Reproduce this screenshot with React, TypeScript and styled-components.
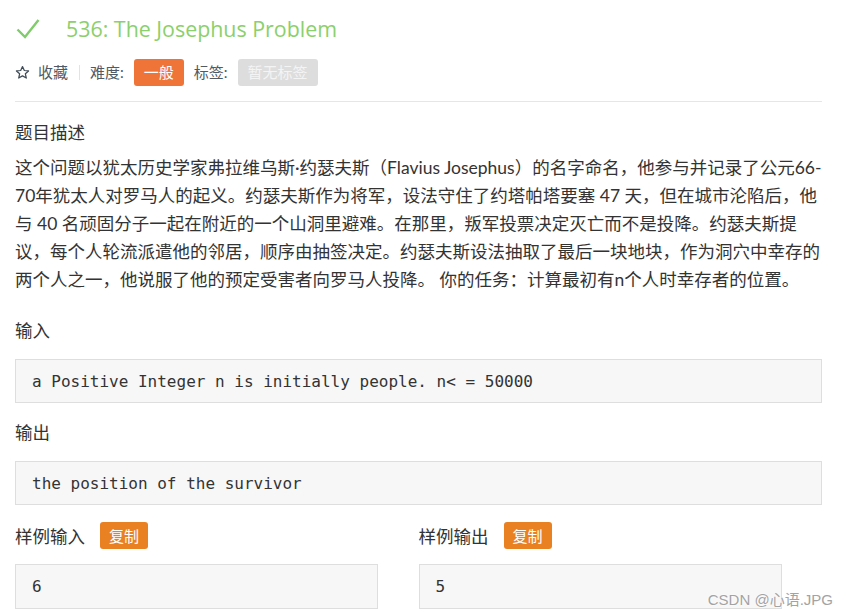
import styled, { createGlobalStyle } from "styled-components";

const GlobalStyle = createGlobalStyle`
  html, body {
    margin: 0;
    padding: 0;
    background: #ffffff;
  }
  body {
    font-family: "Lato", "Noto Sans CJK SC", sans-serif;
    color: #333333;
  }
  * {
    box-sizing: border-box;
  }
`;

const ProblemPage = styled.div`
  position: relative;
  width: 847px;
  height: 615px;
  overflow: hidden;
  padding: 9px 25px 0 15px;
`;

const TitleRow = styled.div`
  display: flex;
  align-items: center;
  height: 40px;
`;

const CheckMark = styled.svg`
  width: 24px;
  height: 22px;
  margin-left: 1px;
  flex-shrink: 0;
`;

const ProblemTitle = styled.h1`
  margin: 0 0 0 26px;
  font-family: "Open Sans", "Noto Sans", sans-serif;
  font-size: 21.4px;
  font-weight: 400;
  color: #8bd06c;
  line-height: 40px;
`;

const MetaRow = styled.div`
  display: flex;
  align-items: center;
  height: 27px;
  margin-top: 10px;
  font-size: 15px;
  color: #4f5a66;
`;

const MetaItem = styled.span`
  display: flex;
  align-items: center;
  gap: 8px;
  line-height: 27px;
`;

const MetaSeparator = styled.span`
  width: 1px;
  height: 15px;
  background: #e3e3e3;
  margin: 0 10px 0 11px;
`;

const MetaLabel = styled.span<{ $gapBefore?: number }>`
  margin-left: ${(p) => p.$gapBefore ?? 0}px;
  margin-right: 10px;
  line-height: 27px;
`;

const Badge = styled.span<{ $tone: "orange" | "grey" }>`
  display: inline-block;
  height: 27px;
  line-height: 27px;
  padding: 0 10px;
  border-radius: 3px;
  font-size: 15px;
  color: ${(p) => (p.$tone === "orange" ? "#ffffff" : "#f4f4f4")};
  background: ${(p) => (p.$tone === "orange" ? "#ee7437" : "#dddddd")};
`;

const Divider = styled.div`
  margin-top: 15px;
  border-top: 1px solid #e6e6e6;
`;

const SectionTitle = styled.h2<{ $top: number }>`
  margin: ${(p) => p.$top}px 0 0;
  font-size: 17.5px;
  font-weight: 400;
  line-height: 28px;
  color: #333333;
`;

const Description = styled.p`
  margin: 7px 0 0;
  font-size: 17.5px;
  line-height: 28px;
  color: #333333;
`;

const CodeBox = styled.div<{ $width?: string; $height?: number; $top?: number }>`
  width: ${(p) => p.$width ?? "100%"};
  height: ${(p) => p.$height ?? 44}px;
  margin-top: ${(p) => p.$top ?? 14}px;
  padding: 0 16px;
  background: #f7f7f7;
  border: 1px solid #dedede;
  display: flex;
  align-items: center;
  font-family: "DejaVu Sans Mono", "Liberation Mono", monospace;
  font-size: 16px;
  color: #333333;
  white-space: pre;
`;

const SampleGrid = styled.div`
  display: grid;
  grid-template-columns: 1fr 1fr;
  margin-top: 16px;
`;

const SampleColumn = styled.div`
  display: flex;
  flex-direction: column;
`;

const SampleHeader = styled.div`
  display: flex;
  align-items: center;
  height: 28px;
  font-size: 17.5px;
  color: #333333;
  gap: 15px;
`;

const CopyButton = styled.button`
  height: 27px;
  padding: 0 9px;
  border: none;
  border-radius: 3px;
  background: #e98123;
  color: #ffffff;
  font-family: "Noto Sans CJK SC", sans-serif;
  font-size: 15px;
  line-height: 27px;
  cursor: pointer;
`;

const Watermark = styled.span`
  position: absolute;
  right: 14px;
  bottom: 6px;
  font-family: "Liberation Sans", "Noto Sans CJK SC", sans-serif;
  font-size: 15px;
  color: #a3a3a3;
  text-shadow: 0 0 2px #ffffff, 0 0 2px #ffffff;
`;

const StarIcon = () => (
  <svg width="15" height="15" viewBox="0 0 24 24" fill="none">
    <path
      d="M12 2.5l2.9 6.3 6.8.7-5.1 4.6 1.5 6.8L12 17.4l-6.1 3.5 1.5-6.8-5.1-4.6 6.8-.7z"
      stroke="#3f4b57"
      strokeWidth="2"
      strokeLinejoin="round"
    />
  </svg>
);

const App = () => {
  return (
    <>
      <GlobalStyle />
      <ProblemPage>
        <TitleRow>
          <CheckMark viewBox="0 0 24 22">
            <path
              d="M1.5 11.5l7.5 7.5L22.5 2"
              fill="none"
              stroke="#7fcc6a"
              strokeWidth="2.4"
            />
          </CheckMark>
          <ProblemTitle>536: The Josephus Problem</ProblemTitle>
        </TitleRow>

        <MetaRow>
          <MetaItem>
            <StarIcon />
            收藏
          </MetaItem>
          <MetaSeparator />
          <MetaLabel>难度:</MetaLabel>
          <Badge $tone="orange">一般</Badge>
          <MetaLabel $gapBefore={10}>标签:</MetaLabel>
          <Badge $tone="grey">暂无标签</Badge>
        </MetaRow>

        <Divider />

        <SectionTitle $top={17}>题目描述</SectionTitle>
        <Description>
          这个问题以犹太历史学家弗拉维乌斯·约瑟夫斯（Flavius Josephus）的名字命名，他参与并记录了公元66-
          <wbr />
          70年犹太人对罗马人的起义。约瑟夫斯作为将军，设法守住了约塔帕塔要塞 47 天，但在城市沦陷后，他与 40
          名顽固分子一起在附近的一个山洞里避难。在那里，叛军投票决定灭亡而不是投降。约瑟夫斯提议，每个人轮流派遣他的邻居，顺序由抽签决定。约瑟夫斯设法抽取了最后一块地块，作为洞穴中幸存的两个人之一，他说服了他的预定受害者向罗马人投降。
          你的任务：计算最初有n个人时幸存者的位置。
        </Description>

        <SectionTitle $top={23}>输入</SectionTitle>
        <CodeBox>a Positive Integer n is initially people. n&lt; = 50000</CodeBox>

        <SectionTitle $top={16}>输出</SectionTitle>
        <CodeBox>the position of the survivor</CodeBox>

        <SampleGrid>
          <SampleColumn>
            <SampleHeader>
              样例输入
              <CopyButton>复制</CopyButton>
            </SampleHeader>
            <CodeBox $width="90%" $height={45} $top={15}>
              6
            </CodeBox>
          </SampleColumn>
          <SampleColumn>
            <SampleHeader>
              样例输出
              <CopyButton>复制</CopyButton>
            </SampleHeader>
            <CodeBox $width="90%" $height={45} $top={15}>
              5
            </CodeBox>
          </SampleColumn>
        </SampleGrid>

        <Watermark>CSDN @心语.JPG</Watermark>
      </ProblemPage>
    </>
  );
};

export default App;
